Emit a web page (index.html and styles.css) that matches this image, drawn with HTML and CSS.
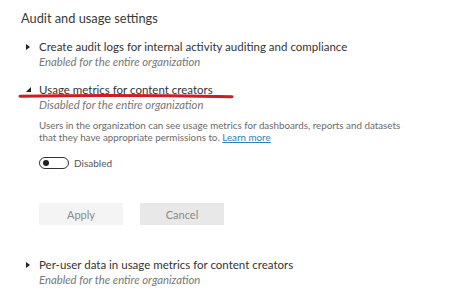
FILE: index.html
```html
<!DOCTYPE html>
<html lang="en">
  <head>
    <meta charset="UTF-8" />
    <meta name="viewport" content="width=device-width, initial-scale=1.0" />
    <title>Audit and usage settings</title>
    <link rel="stylesheet" href="styles.css">
  </head>
  <body>
    <div class="container">
      <h2 class="section-title">Audit and usage settings</h2>

      <div class="setting">
        <span class="caret caret-right"></span>
        <div class="setting-body">
          <div class="setting-name">Create audit logs for internal activity auditing and compliance</div>
          <div class="setting-status">Enabled for the entire organization</div>
        </div>
      </div>

      <div class="setting expanded">
        <span class="caret caret-down"></span>
        <div class="setting-body">
          <div class="setting-name">Usage metrics for content creators</div>
          <div class="setting-status">Disabled for the entire organization</div>
          <p class="setting-description">
            Users in the organization can see usage metrics for dashboards, reports and datasets<br>
            that they have appropriate permissions to. <a href="#">Learn more</a>
          </p>
          <div class="toggle-row">
            <span class="toggle"><span class="knob"></span></span>
            <span class="toggle-label">Disabled</span>
          </div>
          <div class="actions">
            <button class="btn btn-apply">Apply</button>
            <button class="btn btn-cancel">Cancel</button>
          </div>
        </div>
        <!-- red marker stroke drawn over the heading -->
        <svg class="marker" width="218" height="6" viewBox="0 0 218 6">
          <path d="M2 3.2 C 60 2.4, 150 2.6, 214 3.8" stroke="#cc1d25" stroke-width="3" fill="none" stroke-linecap="round" />
        </svg>
      </div>

      <div class="setting">
        <span class="caret caret-right"></span>
        <div class="setting-body">
          <div class="setting-name">Per-user data in usage metrics for content creators</div>
          <div class="setting-status">Enabled for the entire organization</div>
        </div>
      </div>
    </div>
  </body>
</html>
```

FILE: styles.css
```css
body {
  font-family: Lato, 'Open Sans', sans-serif;
  margin: 0;
  padding: 0;
  background-color: #fff;
  color: #333;
}
.container {
  padding: 8px 0 0 21px;
}
.section-title {
  margin: 0 0 12px;
  font-size: 12.8px;
  font-weight: 400;
  line-height: 20px;
  color: #3a3a3a;
}
.setting {
  display: flex;
  position: relative;
  margin-bottom: 14px;
}
.caret {
  width: 18px;
  flex: none;
  position: relative;
}
.caret-right::before {
  content: '';
  position: absolute;
  left: 5px;
  top: 4px;
  border-top: 3px solid transparent;
  border-bottom: 3px solid transparent;
  border-left: 4px solid #222;
}
.caret-down::before {
  content: '';
  position: absolute;
  left: 5px;
  top: 4px;
  border-left: 5px solid transparent;
  border-bottom: 5px solid #222;
}
.setting-name {
  font-size: 11.5px;
  line-height: 14px;
  color: #333;
}
.setting-status {
  font-size: 11.3px;
  line-height: 15px;
  font-style: italic;
  color: #777;
}
.setting-description {
  margin: 7px 0 0;
  font-size: 9.8px;
  line-height: 12px;
  color: #6b6b6b;
}
.setting-description a {
  color: #2d7fb8;
}
.toggle-row {
  display: flex;
  align-items: center;
  margin-top: 14px;
}
.toggle {
  display: flex;
  align-items: center;
  width: 25px;
  height: 10px;
  border: 1px solid #333;
  border-radius: 6px;
  padding-left: 3px;
}
.knob {
  width: 6px;
  height: 6px;
  border-radius: 50%;
  background: #222;
}
.toggle-label {
  margin-left: 5px;
  font-size: 10px;
  color: #555;
}
.actions {
  display: flex;
  gap: 17px;
  margin-top: 34px;
  margin-bottom: 19px;
}
.btn {
  width: 84px;
  height: 22px;
  border: none;
  font-family: inherit;
  font-size: 11px;
  color: #8a8a8a;
}
.btn-apply {
  background-color: #f4f4f4;
}
.btn-cancel {
  background-color: #e8e8e8;
}
.marker {
  position: absolute;
  left: -3px;
  top: 10px;
}
```
